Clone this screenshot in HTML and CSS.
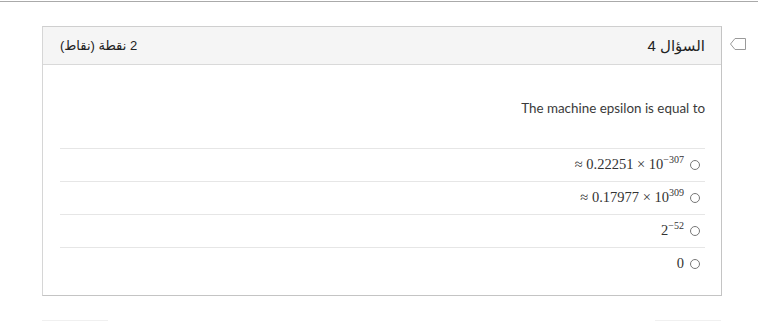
FILE: index.html
```html
<!DOCTYPE html>
<html lang="ar" dir="rtl">
<head>
    <meta charset="UTF-8">
    <title>السؤال 4</title>
    <link rel="stylesheet" href="styles.css">
</head>
<body>

    <!-- Top rule -->
    <div class="top-rule"></div>

    <!-- Question -->
    <div class="question-row">
        <div class="flag">
            <svg width="18" height="14" viewBox="0 0 18 14">
                <path d="M16.5 1.5 H6 L1.5 7 L6 12.5 H16.5 Z" fill="none" stroke="#9a9a9a" stroke-width="1"/>
            </svg>
        </div>

        <div class="question-card">
            <div class="question-header">
                <span class="q-title">السؤال 4</span>
                <span class="q-points">2 نقطة (نقاط)</span>
            </div>
            <div class="question-body">
                <div class="q-text" dir="ltr">The machine epsilon is equal to</div>
                <div class="answers">
                    <div class="answer">
                        <span class="radio"></span>
                        <span class="math" dir="ltr">≈ 0.22251 × 10<sup>−307</sup></span>
                    </div>
                    <div class="answer">
                        <span class="radio"></span>
                        <span class="math" dir="ltr">≈ 0.17977 × 10<sup>309</sup></span>
                    </div>
                    <div class="answer">
                        <span class="radio"></span>
                        <span class="math" dir="ltr">2<sup>−52</sup></span>
                    </div>
                    <div class="answer">
                        <span class="radio"></span>
                        <span class="math" dir="ltr">0</span>
                    </div>
                </div>
            </div>
        </div>
    </div>

    <!-- Footer buttons (cut off) -->
    <div class="bottom-bar">
        <span class="stub"></span>
        <span class="stub"></span>
    </div>

</body>
</html>
```

FILE: styles.css
```css
body {
    margin: 0;
    padding: 0;
    background-color: #fff;
    font-family: "Liberation Sans", "DejaVu Sans", Arial, sans-serif;
    color: #333;
    overflow: hidden;
}
.top-rule {
    height: 1px;
    margin-top: 1px;
    background-color: #aaa;
}
.question-row {
    display: flex;
    align-items: flex-start;
    gap: 7px;
    padding-right: 11px;
    margin-top: 24px;
}
.flag {
    width: 18px;
    padding-top: 11px;
    line-height: 0;
}
.question-card {
    width: 678px;
    border: 1px solid #cfcfcf;
    border-left-color: #d6d6d6;
    border-right-color: #c4c4c4;
    border-bottom-color: #c4c4c4;
}
.question-header {
    display: flex;
    justify-content: space-between;
    align-items: center;
    height: 37px;
    padding: 0 16px 0 17px;
    background-color: #f5f5f5;
    border-bottom: 1px solid #d9d9d9;
    font-size: 14px;
    color: #222;
}
.q-title {
    font-size: 15px;
}
.q-points {
    font-size: 13px;
}
.question-body {
    padding: 0 16px 15px 17px;
}
.q-text {
    text-align: right;
    font-family: Lato, "Liberation Sans", sans-serif;
    font-size: 13.4px;
    color: #3a3a3a;
    padding: 35px 0 32px;
    line-height: 16px;
}
.answer {
    display: flex;
    align-items: center;
    gap: 6px;
    height: 32px;
    border-top: 1px solid #e6e6e6;
    padding-right: 5px;
}
.radio {
    width: 8px;
    height: 8px;
    border: 1px solid #777;
    border-radius: 50%;
    flex-shrink: 0;
}
.math {
    font-family: "Liberation Serif", "DejaVu Serif", serif;
    font-size: 14.5px;
    color: #333;
    margin-top: -2px;
}
.math sup {
    font-size: 10px;
    vertical-align: 6px;
    line-height: 0;
}
.bottom-bar {
    display: flex;
    justify-content: space-between;
    padding: 0 37px 0 42px;
    margin-top: 24px;
}
.stub {
    width: 66px;
    height: 2px;
    border-top: 1px solid #f0f0f0;
}
```
